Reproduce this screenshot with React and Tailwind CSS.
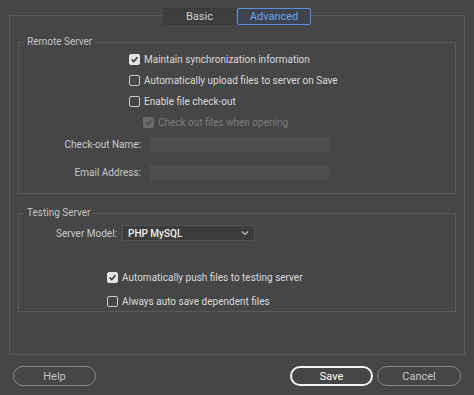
import React from "react";

function Check({ checked, disabled }) {
  const box = disabled
    ? "bg-[#6b6b6b] border-[#6b6b6b]"
    : checked
    ? "bg-[#e2e2e2] border-[#e2e2e2]"
    : "bg-transparent border-[#c9c9c9]";
  return (
    <span className={`w-[11px] h-[11px] border rounded-[2px] flex items-center justify-center shrink-0 ${box}`}>
      {checked && (
        <svg width="9" height="9" viewBox="0 0 10 10">
          <path d="M2 5.2 L4.2 7.4 L8.2 2.6" fill="none" stroke={disabled ? "#4a4a4a" : "#3a3a3a"} strokeWidth="1.8" />
        </svg>
      )}
    </span>
  );
}

function Row({ label, checked, disabled, className = "" }) {
  return (
    <div className={`flex items-center gap-[4px] h-[21px] ${className}`}>
      <Check checked={checked} disabled={disabled} />
      <span className={disabled ? "text-[#7c7c7c]" : "text-[#dadada]"}>{label}</span>
    </div>
  );
}

function Group({ title, className = "", children }) {
  return (
    <fieldset className={`border border-[#5a5a5a] mx-[8px] ${className}`}>
      <legend className="ml-[5px] px-[3px] text-[#c4c4c4] leading-[14px]">{title}</legend>
      {children}
    </fieldset>
  );
}

export default function App() {
  return (
    <div
      className="w-[474px] h-[395px] bg-[#464646] text-[10px] leading-[15px] overflow-hidden"
      style={{ fontFamily: 'Roboto, "Noto Sans", sans-serif' }}
    >
      <div className="mx-[9px] mt-[15px] h-[340px] border border-[#5a5a5a]">
        <div className="flex justify-center -mt-[8px]">
          <div className="w-[73px] h-[17px] bg-[#3e3e3e] border border-[#3a3a3a] text-[#cfcfcf] text-[11px] flex items-center justify-center">
            Basic
          </div>
          <div className="w-[74px] h-[17px] ml-[1px] bg-[#3d4450] border border-[#5e8fd6] rounded-[2px] text-[#6fa3ea] text-[11px] flex items-center justify-center">
            Advanced
          </div>
        </div>

        <Group title="Remote Server" className="mt-[10px] pb-[13px]">
          <div className="pl-[110px]">
            <Row label="Maintain synchronization information" checked />
            <Row label="Automatically upload files to server on Save" />
            <Row label="Enable file check-out" />
            <Row label="Check out files when opening" checked disabled className="pl-[14px]" />
          </div>
          <div className="grid grid-cols-[122px_179px] gap-x-[9px] gap-y-[13px] items-center mt-[4px] text-[#c9c9c9]">
            <div className="text-right">Check-out Name:</div>
            <div className="h-[15px] bg-[#4e4e4e]" />
            <div className="text-right">Email Address:</div>
            <div className="h-[15px] bg-[#4e4e4e]" />
          </div>
        </Group>

        <Group title="Testing Server" className="mt-[12px] h-[106px]">
          <div className="flex items-center mt-[5px]">
            <div className="w-[98px] text-right text-[#c9c9c9]">Server Model:</div>
            <div className="ml-[5px] w-[133px] h-[16px] bg-[#3c3c3c] border border-[#535353] flex items-center justify-between pl-[5px] pr-[5px] text-[#f0f0f0] font-medium">
              <span>PHP MySQL</span>
              <svg width="8" height="6" viewBox="0 0 8 6">
                <path d="M1 1.5 L4 4.5 L7 1.5" fill="none" stroke="#bdbdbd" strokeWidth="1.2" />
              </svg>
            </div>
          </div>
          <div className="pl-[88px] mt-[26px] flex flex-col gap-[3px]">
            <Row label="Automatically push files to testing server" checked />
            <Row label="Always auto save dependent files" />
          </div>
        </Group>
      </div>

      <div className="flex items-center mt-[11px] px-[13px]">
        <button className="w-[83px] h-[20px] rounded-full border border-[#8c8c8c] text-[#c4c4c4] text-[11px]">Help</button>
        <div className="flex-1" />
        <button className="w-[83px] h-[20px] rounded-full border-2 border-[#f2f2f2] text-[#ffffff] text-[11px]">Save</button>
        <button className="w-[84px] h-[20px] ml-[4px] rounded-full border border-[#8c8c8c] text-[#c4c4c4] text-[11px]">Cancel</button>
      </div>
    </div>
  );
}
